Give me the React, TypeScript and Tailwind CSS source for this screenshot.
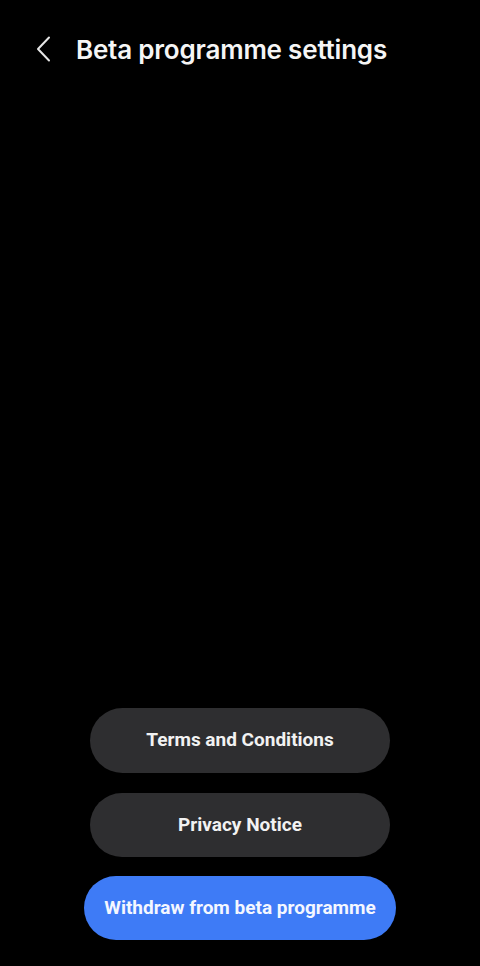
export default function App() {
  const font = { fontFamily: "Roboto, 'Liberation Sans', sans-serif" };
  return (
    <div className="w-[480px] h-[966px] bg-black flex flex-col text-white" style={font}>
      <div className="flex items-center h-[100px] pt-[2px] pb-[4px]">
        <button className="w-[76px] h-[50px] flex items-center justify-start pl-[36px]">
          <svg width="16" height="26" viewBox="0 0 16 26" fill="none">
            <path d="M13 1.5L2 13L13 24.5" stroke="#e6e6e6" strokeWidth="2" strokeLinecap="round" strokeLinejoin="round" />
          </svg>
        </button>
        <h1 className="text-[26px] font-[600] tracking-[-0.2px] text-[#f5f5f5]" style={{ fontFamily: "Inter, 'Open Sans', sans-serif" }}>
          Beta programme settings
        </h1>
      </div>

      <div className="flex-1" />

      <div className="flex flex-col items-center gap-[20px] pb-[26px]">
        <button className="w-[300px] h-[65px] rounded-full bg-[#2e2e30] text-[19px] font-bold text-[#f2f2f2]">
          Terms and Conditions
        </button>
        <button className="w-[300px] h-[64px] rounded-full bg-[#2e2e30] text-[19px] font-bold text-[#f2f2f2]">
          Privacy Notice
        </button>
        <button className="w-[312px] h-[64px] rounded-full bg-[#3e7bf6] text-[19px] font-bold text-[#f4f7ff] mt-[-1px]">
          Withdraw from beta programme
        </button>
      </div>
    </div>
  );
}
